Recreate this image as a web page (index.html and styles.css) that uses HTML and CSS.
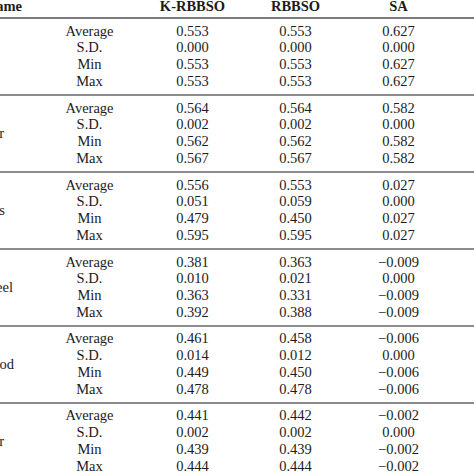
FILE: index.html
```html
<!DOCTYPE html>
<html>
<head>
<meta charset="utf-8">
<link rel="stylesheet" href="styles.css">
</head>
<body>
<div class="table">
  <div class="head">
    <div class="cell name n-head">Name</div>
    <div class="cell"></div>
    <div class="cell">K-RBBSO</div>
    <div class="cell">RBBSO</div>
    <div class="cell">SA</div>
  </div>

  <div class="group">
    <div class="cell name n-hidden">Hotel</div>
    <div class="cell">Average</div><div class="cell">0.553</div><div class="cell">0.553</div><div class="cell">0.627</div>
    <div class="cell">S.D.</div><div class="cell">0.000</div><div class="cell">0.000</div><div class="cell">0.000</div>
    <div class="cell">Min</div><div class="cell">0.553</div><div class="cell">0.553</div><div class="cell">0.627</div>
    <div class="cell">Max</div><div class="cell">0.553</div><div class="cell">0.553</div><div class="cell">0.627</div>
  </div>

  <div class="group">
    <div class="cell name n-r">Letter</div>
    <div class="cell">Average</div><div class="cell">0.564</div><div class="cell">0.564</div><div class="cell">0.582</div>
    <div class="cell">S.D.</div><div class="cell">0.002</div><div class="cell">0.002</div><div class="cell">0.000</div>
    <div class="cell">Min</div><div class="cell">0.562</div><div class="cell">0.562</div><div class="cell">0.582</div>
    <div class="cell">Max</div><div class="cell">0.567</div><div class="cell">0.567</div><div class="cell">0.582</div>
  </div>

  <div class="group">
    <div class="cell name n-s">Glass</div>
    <div class="cell">Average</div><div class="cell">0.556</div><div class="cell">0.553</div><div class="cell">0.027</div>
    <div class="cell">S.D.</div><div class="cell">0.051</div><div class="cell">0.059</div><div class="cell">0.000</div>
    <div class="cell">Min</div><div class="cell">0.479</div><div class="cell">0.450</div><div class="cell">0.027</div>
    <div class="cell">Max</div><div class="cell">0.595</div><div class="cell">0.595</div><div class="cell">0.027</div>
  </div>

  <div class="group">
    <div class="cell name n-l">Steel</div>
    <div class="cell">Average</div><div class="cell">0.381</div><div class="cell">0.363</div><div class="cell">&minus;0.009</div>
    <div class="cell">S.D.</div><div class="cell">0.010</div><div class="cell">0.021</div><div class="cell">0.000</div>
    <div class="cell">Min</div><div class="cell">0.363</div><div class="cell">0.331</div><div class="cell">&minus;0.009</div>
    <div class="cell">Max</div><div class="cell">0.392</div><div class="cell">0.388</div><div class="cell">&minus;0.009</div>
  </div>

  <div class="group">
    <div class="cell name n-d">Wood</div>
    <div class="cell">Average</div><div class="cell">0.461</div><div class="cell">0.458</div><div class="cell">&minus;0.006</div>
    <div class="cell">S.D.</div><div class="cell">0.014</div><div class="cell">0.012</div><div class="cell">0.000</div>
    <div class="cell">Min</div><div class="cell">0.449</div><div class="cell">0.450</div><div class="cell">&minus;0.006</div>
    <div class="cell">Max</div><div class="cell">0.478</div><div class="cell">0.478</div><div class="cell">&minus;0.006</div>
  </div>

  <div class="group">
    <div class="cell name n-r">Water</div>
    <div class="cell">Average</div><div class="cell">0.441</div><div class="cell">0.442</div><div class="cell">&minus;0.002</div>
    <div class="cell">S.D.</div><div class="cell">0.002</div><div class="cell">0.002</div><div class="cell">0.000</div>
    <div class="cell">Min</div><div class="cell">0.439</div><div class="cell">0.439</div><div class="cell">&minus;0.002</div>
    <div class="cell">Max</div><div class="cell">0.444</div><div class="cell">0.444</div><div class="cell">&minus;0.002</div>
  </div>
</div>
</body>
</html>
```

FILE: styles.css
```css
html, body {
  margin: 0;
  padding: 0;
  background: #ffffff;
  overflow: hidden;
  width: 474px;
  height: 474px;
}

.table {
  width: 540px;
  margin-left: -42px;
  font-family: "Liberation Serif", "Times New Roman", serif;
  font-size: 14.5px;
  color: #1c1c1c;
}

.head,
.group {
  display: grid;
  grid-template-columns: 80px 103px 103px 103px 103px;
}

.head {
  height: 17px;
  line-height: 13px;
  font-weight: bold;
  border-bottom: 2px solid #7a7a7a;
}

.group {
  grid-template-rows: repeat(4, 16.8px);
  padding: 3.6px 0 4.2px;
  line-height: 16.8px;
  border-bottom: 2px solid #8c8c8c;
}

.cell {
  text-align: center;
  white-space: nowrap;
}

.group .name {
  grid-row: 1 / 5;
  grid-column: 1;
  align-self: center;
}

.name {
  text-align: right;
  overflow: hidden;
}

.n-head { padding-right: 16px; }
.n-hidden { padding-right: 44px; }
.n-r { padding-right: 34px; }
.n-s { padding-right: 33px; }
.n-l { padding-right: 25px; }
.n-d { padding-right: 24px; }
```
